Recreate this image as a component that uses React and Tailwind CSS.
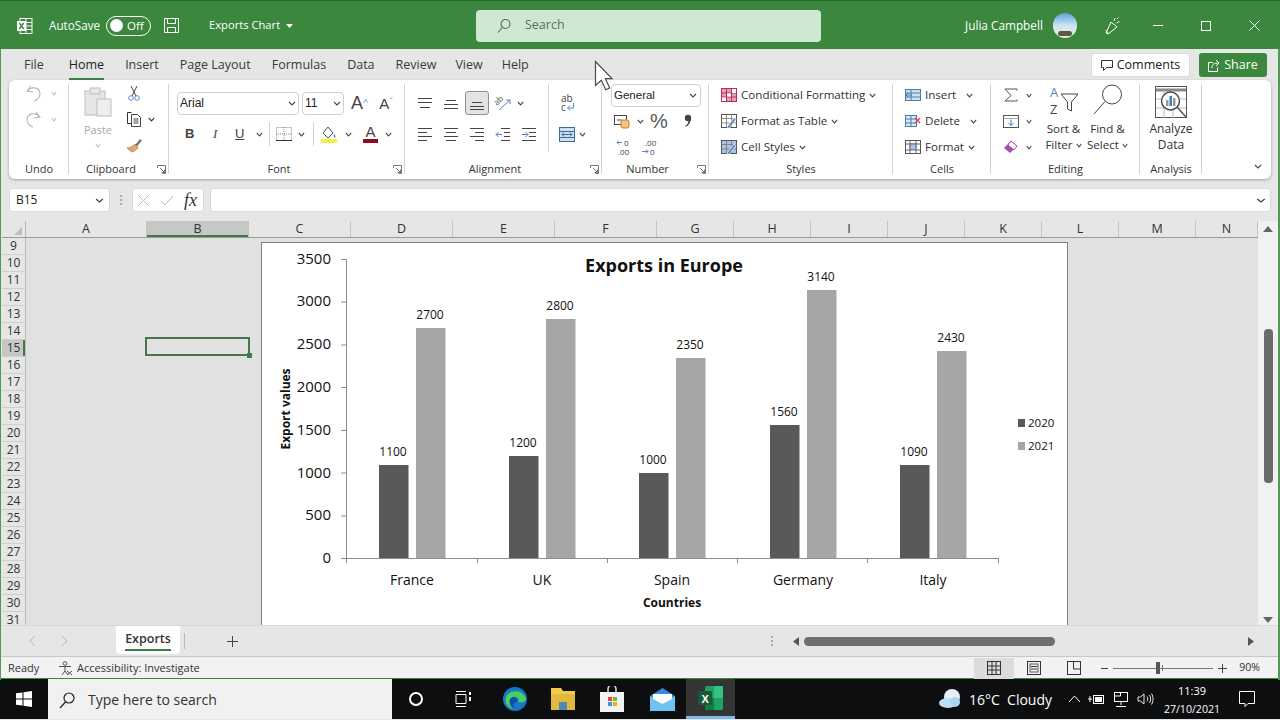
import React from "react";

const Chev = ({ c = "#444", w = 8 }) => (
  <svg width={w} height="5" viewBox="0 0 8 5" preserveAspectRatio="none" className="shrink-0"><path d="M1 1l3 3 3-3" fill="none" stroke={c} strokeWidth="1.1" /></svg>
);
const S = ({ w = 16, h = 16, children, className = "" }) => (
  <svg width={w} height={h} viewBox={`0 0 ${w} ${h}`} className={`shrink-0 overflow-visible ${className}`} fill="none">{children}</svg>
);
const Launcher = () => (
  <S w={9} h={9}><path d="M.5 3v-2.5h8v8h-3M3 3l4.5 4.5M7.5 4.5v3h-3" stroke="#666" strokeWidth=".9" /></S>
);
const Lines = ({ ys, spans, c = "#444" }) => (
  <S w={16} h={16}>{ys.map((y, i) => <path key={i} d={`M${spans[i][0]} ${y}.5H${spans[i][1]}`} stroke={c} />)}</S>
);
const Group = ({ w, label, launcher, sep = true, children, lx = "" }) => (
  <div className="flex flex-col shrink-0 h-full relative" style={{ width: w }}>
    <div className="h-[80px] flex">{children}</div>
    <div className={`h-[18px] flex items-center justify-center text-[11px] text-[#333] ${lx}`}>{label}</div>
    {launcher && <div className="absolute right-[3px] bottom-[5px] flex"><Launcher /></div>}
    {sep && <div className="absolute right-0 top-[4px] bottom-[5px] w-px bg-[#d4d4d4]" />}
  </div>
);
const Tab = ({ children, active }) => (
  <div className={`h-[31px] pt-[1px] flex items-center relative text-[12.5px] ${active ? "text-[#1e1e1e] font-medium" : "text-[#3a3a3a]"}`}>
    {children}
    {active && <div className="absolute left-0 right-0 bottom-0 h-[2px] bg-[#3b7d43]" />}
  </div>
);
const GridIcon = ({ a = "#b03060", fill = "#e8a0b0" }) => (
  <S w={16} h={16}><rect x=".5" y="1.5" width="15" height="13" fill={fill} stroke={a} /><path d="M.5 6h15M.5 10h15M5.5 1.5v13M10.5 1.5v13" stroke={a} /><rect x="6" y="6.5" width="4" height="3" fill="#fff" /><rect x="11" y="2" width="4" height="4" fill="#fff" /><rect x="1" y="10.5" width="4" height="3.5" fill="#fff" /></S>
);
const TableIcon = ({ cell }) => (
  <S w={16} h={16}><rect x=".5" y="1.5" width="15" height="13" fill={cell ? "#a9c4e6" : "#fff"} stroke="#555" /><path d="M.5 5.5h15M.5 10h15M5.5 1.5v13M10.5 1.5v13" stroke="#777" strokeWidth=".8" /><path d="M6 14l7-9 2 1.5-7 9z" fill="#5a86bf" stroke="#fff" strokeWidth=".7" /></S>
);

const cols = [["A", 121], ["B", 102], ["C", 102], ["D", 102], ["E", 102], ["F", 102], ["G", 77], ["H", 77], ["I", 77], ["J", 77], ["K", 77], ["L", 77], ["M", 77], ["N", 62]];
const rows = Array.from({ length: 23 }, (_, i) => i + 9);

const series = [
  ["France", 379, 465, 1100, 416, 328, 2700],
  ["UK", 509, 456, 1200, 546, 319, 2800],
  ["Spain", 639, 473, 1000, 676, 358, 2350],
  ["Germany", 770, 425, 1560, 807, 290, 3140],
  ["Italy", 900, 465, 1090, 937, 351, 2430],
];

const Chart = () => (
  <svg width="805" height="383" viewBox="262 243 805 383" className="block" fontFamily="'Open Sans',sans-serif">
    <path d="M346.5 259v299.5H998M341 259.5h5M341 302h5M341 345h5M341 387.5h5M341 430.5h5M341 473h5M341 516h5M341 558.5h5M477.5 558v5M607.5 558v5M737.5 558v5M867.5 558v5M998.5 558v5M346.5 558v5" stroke="#8c8c8c" fill="none" />
    {[3500, 3000, 2500, 2000, 1500, 1000, 500, 0].map((v, i) => (
      <text key={v} x="331" y={263.5 + i * 42.8} textAnchor="end" fontSize="15" fill="#111">{v}</text>
    ))}
    {series.map(([n, x1, t1, v1, x2, t2, v2]) => (
      <g key={n}>
        <rect x={x1} y={t1} width="29.5" height={558 - t1} fill="#595959" />
        <rect x={x2} y={t2} width="29.5" height={558 - t2} fill="#a6a6a6" />
        <text x={x1 + 14} y={t1 - 9} textAnchor="middle" fontSize="12" fill="#111">{v1}</text>
        <text x={x2 + 14} y={t2 - 9} textAnchor="middle" fontSize="12" fill="#111">{v2}</text>
        <text x={x1 + 33} y="584.5" textAnchor="middle" fontSize="14" fill="#111">{n}</text>
      </g>
    ))}
    <text x="664" y="271.5" textAnchor="middle" fontSize="18" fontWeight="700" fill="#111">Exports in Europe</text>
    <text x="672" y="607" textAnchor="middle" fontSize="12" fontWeight="700" fill="#111">Countries</text>
    <text transform="translate(290 409) rotate(-90)" textAnchor="middle" fontSize="12" fontWeight="700" fill="#111">Export values</text>
    <rect x="1018" y="419" width="7" height="8" fill="#595959" />
    <rect x="1018" y="442" width="7" height="8" fill="#a6a6a6" />
    <text x="1028" y="427" fontSize="11.5" fill="#111">2020</text>
    <text x="1028" y="450" fontSize="11.5" fill="#111">2021</text>
  </svg>
);

export default function App() {
  return (
    <div className="relative w-[1280px] h-[720px] overflow-hidden flex flex-col bg-[#e6e6e6] font-['Open_Sans',sans-serif] text-[#333]">
      {/* Title bar */}
      <div className="h-[49px] shrink-0 bg-[#3a873d] border-t border-[#1f6d2d] pt-[1px] flex items-center text-white text-[12px]">
        <div className="ml-[17px] w-[16px] flex">
          <S w={16} h={18}><rect x="3" y="1.5" width="12" height="15" stroke="#fff" /><path d="M3 5.5h12M3 9h12M3 12.5h12M9 1.5v15" stroke="#fff" /><rect x="0" y="4" width="9" height="10" fill="#fff" /><path d="M2.3 6l4.4 6M6.7 6l-4.4 6" stroke="#3a873d" strokeWidth="1.4" /></S>
        </div>
        <span className="ml-[16px] w-[57px] text-[11.7px]">AutoSave</span>
        <div className="w-[45px] h-[20px] rounded-full border border-white flex items-center pl-[3px] gap-[4px]">
          <div className="w-[13px] h-[13px] rounded-full bg-white" />
          <span className="text-[11.5px]">Off</span>
        </div>
        <div className="ml-[12px] flex">
          <S w={17} h={17}><path d="M1.5 1.5h14v14h-14zM4.5 1.5v5h8v-5M4.5 15.5v-5h8v5" stroke="#fff" strokeWidth="1" /></S>
        </div>
        <span className="ml-[29px] w-[77px] text-[11.2px] whitespace-nowrap">Exports Chart</span>
        <svg width="7" height="4" viewBox="0 0 7 4"><path d="M0 0h7L3.5 4z" fill="#fff" /></svg>
        <div className="ml-[183px] w-[345px] h-[32px] bg-[#cfe8d1] rounded-[4px] flex items-center text-[#55705a]">
          <div className="ml-[21px] flex">
            <S w={14} h={16}><circle cx="8.5" cy="6" r="4.5" stroke="#4d6b52" strokeWidth="1.1" /><path d="M5.2 9.5L1 14.5" stroke="#4d6b52" strokeWidth="1.1" /></S>
          </div>
          <span className="ml-[14px] text-[12.5px]">Search</span>
        </div>
        <span className="ml-[144px] w-[85px] text-[11.8px] whitespace-nowrap">Julia Campbell</span>
        <div className="ml-[3px] w-[24px] h-[25px] rounded-full bg-gradient-to-b from-[#5b9fdc] via-[#cfe4f2] to-[#e4eee0] relative overflow-hidden">
          <div className="absolute bottom-[2px] left-[5px] w-[14px] h-[5px] bg-[#5c5a40] rounded-sm" />
        </div>
        <div className="ml-[25px] flex">
          <S w={18} h={20}><path d="M9 6L4 17l2 1 9-7zM3.5 14l3 3.5" stroke="#fff" /><path d="M12 5l1-3M14.5 7l3-1.5M15 3l1.5-1.5" stroke="#fff" /></S>
        </div>
        <div className="ml-[33px] w-[10px] h-px bg-white" />
        <div className="ml-[38px] w-[10px] h-[10px] border border-white" />
        <div className="ml-[38px] flex">
          <S w={11} h={11}><path d="M.5.5l10 10M10.5.5l-10 10" stroke="#fff" /></S>
        </div>
      </div>

      {/* Tabs */}
      <div className="h-[31px] shrink-0 flex items-center pl-[24px] relative">
        <div className="flex gap-[21px] items-center"><Tab>File</Tab>
          <div className="ml-[4px]"><Tab active>Home</Tab></div>
          <Tab>Insert</Tab><Tab>Page Layout</Tab><Tab>Formulas</Tab><Tab>Data</Tab><Tab>Review</Tab>
          <div className="ml-[-2px]"><Tab>View</Tab></div>
          <div className="ml-[-2px]"><Tab>Help</Tab></div>
        </div>
        <div className="ml-auto mr-[13px] flex gap-[9px] items-center">
          <div className="w-[99px] h-[24px] pt-[1px] bg-white rounded-[3px] border border-[#dcdcdc] flex items-center justify-center gap-[4px] text-[12.5px] text-[#222]">
            <S w={12} h={12}><path d="M.5 1.5h11v7h-6l-3 3v-3h-2z" stroke="#333" /></S>Comments
          </div>
          <div className="w-[68px] h-[24px] pt-[1px] bg-[#3a873d] rounded-[3px] flex items-center justify-center gap-[4px] text-[12.5px] text-white">
            <S w={12} h={13}><path d="M5 3.5H.5v9h9v-4M4 9c0-4 2-5 7-5M8 1l3 3-3 3" stroke="#fff" /></S>Share
          </div>
        </div>
      </div>

      {/* Ribbon */}
      <div className="mx-[9px] h-[99px] shrink-0 bg-white rounded-[6px] shadow-[0_1px_3px_rgba(0,0,0,.3)] flex text-[#333]">
        <Group w={60} label="Undo">
          <div className="flex flex-col pl-[16px]">
            <div className="h-[26px] flex items-center gap-[9px]"><S w={17} h={17}><path d="M6 1L2 6l6 1M2.5 6C6 1 14 2 15 8c0 4-3 7-6 8" stroke="#b5b5b5" strokeWidth="1.1" /></S><Chev c="#bbb" w={6} /></div>
            <div className="h-[26px] flex items-center gap-[9px]"><S w={17} h={17}><path d="M11 1l4 5-6 1M14.5 6C11 1 3 2 2 8c0 4 3 7 6 8" stroke="#b5b5b5" strokeWidth="1.1" /></S><Chev c="#bbb" w={6} /></div>
          </div>
        </Group>
        <Group w={100} label="Clipboard" launcher lx="pr-[16px]">
          <div className="w-[50px] pl-[8px] pt-[7px] flex flex-col items-center">
            <S w={28} h={30}><rect x="1" y="4" width="20" height="24" fill="#e6e6e6" stroke="#bdbdbd" /><rect x="6" y="1" width="10" height="6" fill="#e6e6e6" stroke="#bdbdbd" /><rect x="13" y="12" width="14" height="17" fill="#eee" stroke="#bdbdbd" /></S>
            <span className="text-[11px] text-[#a8a8a8] mt-[5px] leading-[16px]">Paste</span>
            <div className="mt-[5px]"><Chev c="#bbb" w={6} /></div>
          </div>
          <div className="flex flex-col ml-[7px]">
            <div className="h-[26px] flex items-center pl-[1px]"><S w={14} h={17}><path d="M4 1l5 10M10 1L5 11" stroke="#444" /><circle cx="4" cy="13" r="2.3" stroke="#5a8cc0" /><circle cx="10" cy="13" r="2.3" stroke="#5a8cc0" /></S></div>
            <div className="h-[26px] flex items-center gap-[4px]"><S w={18} h={17}><path d="M5.5 12.5h-4v-11h4" stroke="#333" /><path d="M5.5 3.5h6l3 3v9h-9zM7.5 8h5M7.5 10h5M7.5 12h5" stroke="#333" strokeWidth=".9" /></S><Chev c="#333" w={7} /></div>
            <div className="h-[26px] flex items-center"><S w={17} h={16}><path d="M9 8l5-6 2 1.5-5 6z" fill="#777" /><path d="M9 7l3 4-5 4c-2 0-5-3-6-4 3 0 6-2 8-4z" fill="#e0a878" stroke="#b8763c" strokeWidth=".7" /></S></div>
          </div>
        </Group>
        <Group w={236} label="Font" launcher lx="pr-[16px]">
          <div className="pl-[8px] pt-[11px] flex flex-col gap-[7px]">
            <div className="flex items-center h-[24px]">
              <div className="w-[122px] h-[23px] rounded-[4px] border border-[#d0d0d0] flex items-center justify-between pl-[2px] pr-[2px] text-[12px] text-[#222] font-['Liberation_Sans',sans-serif]">Arial<Chev /></div>
              <div className="ml-[3px] w-[42px] h-[23px] rounded-[4px] border border-[#d0d0d0] flex items-center justify-between pl-[2px] pr-[2px] text-[12px] text-[#222] font-['Liberation_Sans',sans-serif]">11<Chev /></div>
              <span className="ml-[7px] text-[18px] leading-none font-['Liberation_Sans',sans-serif] text-[#444]">A</span><span className="text-[9px] text-[#5a86bf] self-start mt-[4px]">^</span>
              <span className="ml-[11px] text-[15px] leading-none font-['Liberation_Sans',sans-serif] text-[#444]">A</span><span className="text-[9px] text-[#5a86bf] self-start mt-[4px]">ˇ</span>
            </div>
            <div className="flex items-center h-[24px] pl-[8px]">
              <span className="w-[28px] text-[13px] font-bold text-[#444] font-['Liberation_Sans',sans-serif]">B</span>
              <span className="w-[22px] text-[13px] italic text-[#444] font-['Liberation_Serif',serif]">I</span>
              <span className="w-[15px] text-[13px] underline text-[#444] font-['Liberation_Sans',sans-serif]">U</span>
              <div className="ml-[6px] mr-[6px]"><Chev w={7} /></div>
              <div className="w-px h-[24px] bg-[#d4d4d4]" />
              <div className="ml-[6px]"><S><rect x=".5" y="1.5" width="15" height="13" stroke="#888" strokeDasharray="1 1" /><path d="M8 1v13M0 8h16" stroke="#888" strokeDasharray="1 1" /><path d="M0 14.5h16" stroke="#333" /></S></div>
              <div className="ml-[6px] mr-[8px]"><Chev w={7} /></div>
              <div className="w-px h-[24px] bg-[#d4d4d4]" />
              <div className="ml-[7px] flex flex-col items-center"><S w={16} h={13}><path d="M7 1L2 7l5 5 5-5z" stroke="#555" /><path d="M13 8c1 1 2 2 1 4-1 0-2-2-1-4z" fill="#5a86bf" /></S><div className="w-[16px] h-[4px] bg-[#f2f24a]" /></div>
              <div className="ml-[8px] mr-[11px]"><Chev w={7} /></div>
              <div className="flex flex-col items-center"><span className="text-[15px] leading-[14px] font-['Liberation_Sans',sans-serif] text-[#444]">A</span><div className="w-[15px] h-[4px] bg-[#8f0a20]" /></div>
              <div className="ml-[7px]"><Chev w={7} /></div>
            </div>
          </div>
        </Group>
        <Group w={197} label="Alignment" launcher lx="pr-[17px]">
          <div className="w-[143px] pl-[12px] pt-[11px] flex flex-col gap-[7px]">
            <div className="flex items-center h-[24px] gap-[10px]">
              <Lines ys={[3, 7, 12]} spans={[[1, 15], [1, 15], [3, 13]]} />
              <Lines ys={[5, 9, 13]} spans={[[3, 13], [1, 15], [1, 15]]} />
              <div className="w-[24px] h-[24px] mx-[-4px] rounded-[3px] border border-[#8f8f8f] bg-[#e3e3e3] flex items-center justify-center"><Lines ys={[7, 11, 14]} spans={[[3, 13], [1, 15], [1, 15]]} /></div>
              <S w={16} h={16}><text transform="translate(2 11) rotate(-45)" fontSize="8.5" fill="#555">ab</text><path d="M4 15L15 5M15 5h-4M15 5v4" stroke="#5a86bf" /></S>
              <div className="ml-[-4px]"><Chev w={7} /></div>
            </div>
            <div className="flex items-center h-[24px] gap-[10px]">
              <Lines ys={[2, 6, 10, 14]} spans={[[1, 15], [1, 10], [1, 15], [1, 10]]} />
              <Lines ys={[2, 6, 10, 14]} spans={[[1, 15], [3, 13], [1, 15], [3, 13]]} />
              <Lines ys={[2, 6, 10, 14]} spans={[[1, 15], [6, 15], [1, 15], [6, 15]]} />
              <S><path d="M6 2.5h9M9 6.5h6M9 10.5h6M6 14.5h9" stroke="#444" /><path d="M7 8.5H1M3.5 6L1 8.5 3.5 11" stroke="#5a86bf" /></S>
              <S><path d="M1 2.5h14M8 6.5h7M8 10.5h7M1 14.5h14" stroke="#444" /><path d="M1 8.5h6M4.5 6L7 8.5 4.5 11" stroke="#5a86bf" /></S>
            </div>
          </div>
          <div className="w-px h-[68px] mt-[4px] bg-[#d4d4d4]" />
          <div className="pl-[10px] pt-[11px] flex flex-col gap-[7px]">
            <div className="h-[24px] flex items-center">
              <S w={17} h={19}><text x="2" y="8" fontSize="10" fill="#444">ab</text><text x="2" y="17" fontSize="10" fill="#444">c</text><path d="M14.5 9v5h-6M11 11.5L8.5 14l2.5 2.5" stroke="#5a86bf" /></S>
            </div>
            <div className="h-[24px] flex items-center gap-[4px]">
              <S><rect x=".5" y="1.5" width="15" height="14" fill="#cfe0f2" stroke="#3d6f96" /><path d="M.5 5.5h15M.5 11.5h15" stroke="#3d6f96" /><path d="M3 8.5h10M3 8.5l2-2M3 8.5l2 2M13 8.5l-2-2M13 8.5l-2 2" stroke="#3d6f96" /></S>
              <Chev w={7} />
            </div>
          </div>
        </Group>
        <Group w={107} label="Number" launcher lx="pr-[16px]">
          <div className="pl-[9px] pt-[4px] flex flex-col">
            <div className="w-[90px] h-[23px] rounded-[4px] border border-[#d0d0d0] flex items-center justify-between pl-[2px] pr-[3px] text-[11.5px] text-[#222] font-['Liberation_Sans',sans-serif]">General<Chev /></div>
            <div className="flex items-center h-[26px] mt-[1px] pl-[3px]">
              <S w={16} h={16}><rect x=".5" y="2.5" width="12" height="9" stroke="#444" /><path d="M3 7h5" stroke="#444" /><rect x="7" y="7" width="8" height="8" rx="2" fill="#f2c48a" stroke="#d07a20" /></S>
              <div className="ml-[7px]"><Chev w={7} /></div>
              <span className="ml-[6px] w-[26px] text-[20px] leading-none text-[#555] font-['Liberation_Sans',sans-serif]">%</span>
              <div className="ml-[8px] flex"><S w={8} h={14}><circle cx="4" cy="4" r="3.2" fill="#444" /><path d="M7 4c0 4-2 7-5 9l-.5-1c2-1.5 3-3.5 3-6z" fill="#444" /></S></div>
            </div>
            <div className="flex items-center h-[26px] pl-[5px] gap-[10px]">
              <S w={16} h={17}><path d="M6 3.5H1M3 1.5l-2 2 2 2" stroke="#5a86bf" /><text x="8" y="7" fontSize="8" fill="#444">0</text><text x="2" y="16" fontSize="8" fill="#444">.00</text></S>
              <S w={16} h={17}><text x="3" y="7" fontSize="8" fill="#444">.00</text><path d="M0 12.5h6M4 10.5l2 2-2 2" stroke="#5a86bf" /><text x="8" y="16" fontSize="8" fill="#444">0</text></S>
            </div>
          </div>
        </Group>
        <Group w={184} label="Styles">
          <div className="pl-[12px] pt-[2px] flex flex-col text-[11.6px] text-[#333]">
            <div className="h-[26px] flex items-center gap-[4px]"><GridIcon /><span className="whitespace-nowrap">Conditional Formatting</span><Chev w={7} /></div>
            <div className="h-[26px] flex items-center gap-[4px]"><TableIcon /><span className="whitespace-nowrap">Format as Table</span><Chev w={7} /></div>
            <div className="h-[26px] flex items-center gap-[4px]"><TableIcon cell /><span className="whitespace-nowrap">Cell Styles</span><Chev w={7} /></div>
          </div>
        </Group>
        <Group w={98} label="Cells">
          <div className="pl-[12px] pt-[2px] flex flex-col text-[11.6px] text-[#333]">
            <div className="h-[26px] flex items-center gap-[4px] w-[68px]"><S><rect x=".5" y="2.5" width="15" height="11" fill="#cfe0f2" stroke="#4b7ea8" /><path d="M.5 6h15M.5 10h15M6 2.5v11" stroke="#4b7ea8" /><path d="M7 8H1M3 6L1 8l2 2" stroke="#4b7ea8" /></S><span className="flex-1">Insert</span><Chev w={7} /></div>
            <div className="h-[26px] flex items-center gap-[4px] w-[72px]"><S><rect x=".5" y="2.5" width="11" height="11" fill="#dbe7f4" stroke="#4b7ea8" /><path d="M.5 6h11M.5 10h11M6 2.5v11" stroke="#4b7ea8" /><path d="M10 5l5 5M15 5l-5 5" stroke="#d0455a" strokeWidth="1.4" /></S><span className="flex-1">Delete</span><Chev w={7} /></div>
            <div className="h-[26px] flex items-center gap-[4px] w-[70px]"><S><rect x=".5" y="1.5" width="15" height="13" stroke="#555" /><rect x="4" y="4" width="8" height="7" fill="#a9c4e6" /><path d="M.5 5h15M.5 11h15M5 1.5v13M11 1.5v13" stroke="#666" /></S><span className="flex-1">Format</span><Chev w={7} /></div>
          </div>
        </Group>
        <Group w={149} label="Editing">
          <div className="pl-[12px] pt-[2px] flex flex-col w-[52px]">
            <div className="h-[26px] flex items-center gap-[7px]"><S><path d="M14 3.5V2H2l6 6.5L2 14h12v-1.5" stroke="#555" /></S><Chev w={6} /></div>
            <div className="h-[26px] flex items-center gap-[7px]"><S><rect x=".5" y="2.5" width="15" height="12" stroke="#555" /><path d="M.5 5.5h15" stroke="#aaa" /><path d="M8 6.5v6M5.5 10L8 12.5 10.5 10" stroke="#3f7fb8" /></S><Chev w={6} /></div>
            <div className="h-[26px] flex items-center gap-[7px]"><S><path d="M1 9l7-7 6 5-7 7z" fill="#a84cb0" /><path d="M8 2l6 5-3 4-6-5z" fill="#fff" stroke="#a84cb0" /></S><Chev w={6} /></div>
          </div>
          <div className="w-[47px] flex flex-col items-center pt-[5px] text-[11.6px] leading-[16px] ml-[-3px]">
            <S w={30} h={30}><text x="1" y="12" fontSize="13" fill="#5a86bf" fontFamily="'Open Sans',sans-serif">A</text><text x="1" y="29" fontSize="13" fill="#444" fontFamily="'Open Sans',sans-serif">Z</text><path d="M12 9h17l-6.5 8v9l-4-2v-7z" stroke="#444" /></S>
            <span className="mt-[6px] whitespace-nowrap">Sort &amp;</span>
            <span className="flex items-center gap-[3px] whitespace-nowrap">Filter<Chev w={6} /></span>
          </div>
          <div className="w-[47px] ml-[-3px] flex flex-col items-center pt-[4px] text-[11.6px] leading-[16px]">
            <S w={30} h={31}><circle cx="19" cy="10.5" r="9.5" stroke="#444" /><path d="M12 17.5L1 30" stroke="#444" /></S>
            <span className="mt-[6px] whitespace-nowrap">Find &amp;</span>
            <span className="flex items-center gap-[3px] whitespace-nowrap">Select<Chev w={6} /></span>
          </div>
        </Group>
        <Group w={62} label="Analysis">
          <div className="w-full flex flex-col items-center pt-[6px] text-[12px] leading-[16px]">
            <S w={33} h={32}><rect x=".5" y=".5" width="31" height="31" stroke="#555" /><path d="M1 4h30" stroke="#888" strokeWidth="3" /><path d="M1 13h30M1 22h30M9 4v28M18 4v28" stroke="#bbb" /><circle cx="15.5" cy="15" r="9" fill="#fff" stroke="#444" strokeWidth="1.4" /><path d="M22 21l9 10" stroke="#555" strokeWidth="1.5" /><rect x="11" y="14" width="2.5" height="6" fill="#999" /><rect x="14.5" y="10" width="2.5" height="10" fill="#3f7fb8" /><rect x="18" y="12" width="2.5" height="8" fill="#999" /></S>
            <span className="mt-[3px]">Analyze</span><span>Data</span>
          </div>
        </Group>
        <div className="flex-1 flex items-end justify-end pr-[9px] pb-[10px]"><Chev c="#444" w={8} /></div>
      </div>

      {/* Formula bar */}
      <div className="h-[24px] mt-[9px] shrink-0 mx-[9px] flex items-center">
        <div className="w-[101px] h-[24px] bg-white rounded-[3px] border border-[#dadada] flex items-center justify-between pl-[6px] pr-[5px] text-[12px] text-[#222]">B15<Chev w={9} /></div>
        <div className="w-[22px] flex flex-col items-center gap-[2px]">
          <div className="w-[2px] h-[2px] bg-[#aaa]" /><div className="w-[2px] h-[2px] bg-[#aaa]" /><div className="w-[2px] h-[2px] bg-[#aaa]" />
        </div>
        <div className="w-[72px] h-[24px] bg-white rounded-[3px] border border-[#dadada] flex items-center pl-[4px] gap-[10px]">
          <S w={13} h={13}><path d="M1 1l11 11M12 1L1 12" stroke="#bcbcbc" /></S>
          <S w={14} h={13}><path d="M1 7l4 4 8-9" stroke="#bcbcbc" /></S>
          <span className="text-[18px] leading-none italic font-['Liberation_Serif',serif] text-[#333]">fx</span>
        </div>
        <div className="ml-[6px] flex-1 h-[24px] bg-white rounded-[3px] border border-[#dadada] flex items-center justify-end pr-[4px]"><Chev w={10} /></div>
      </div>

      {/* Sheet */}
      <div className="mt-[9px] h-[404px] shrink-0 flex relative">
        <div className="w-[1258px] flex flex-col shrink-0 pl-[2px]">
          <div className="h-[16px] flex border-b border-[#9a9a9a] text-[12.5px] text-[#333] shrink-0 box-content">
            <div className="w-[24px] flex items-end justify-end pr-[3px] pb-[2px] border-r border-[#bbb]"><svg width="8" height="8" viewBox="0 0 8 8"><path d="M8 0v8H0z" fill="#bdbdbd" /></svg></div>
            {cols.map(([c, w]) => (
              <div key={c} className={`shrink-0 flex items-center justify-center border-r border-[#c4c4c4] leading-none ${c === "B" ? "bg-[#c6c8c6] shadow-[inset_0_-2px_0_#3f7a4a]" : ""}`} style={{ width: w }}>{c}</div>
            ))}
          </div>
          <div className="flex-1 flex overflow-hidden">
            <div className="w-[24px] shrink-0 flex flex-col border-r border-[#bbb] h-[387px] overflow-hidden">
              {rows.map((r) => (
                <div key={r} className={`h-[17px] shrink-0 text-[12px] leading-none flex items-center justify-center border-b border-[#cfcfcf] ${r === 15 ? "bg-[#c6c8c6] shadow-[inset_-2px_0_0_#3f7a4a]" : ""}`}>{r}</div>
              ))}
            </div>
            <div className="flex-1 bg-[#e1e1e1] pl-[235px] pt-[4px] relative">
              <div className="w-[807px] bg-white border-x border-t border-[#7f7f7f] box-border h-[384px] overflow-hidden"><Chart /></div>
              <div className="absolute left-[119px] top-[99px] w-[105px] h-[19px] border-2 border-[#47754f]" />
              <div className="absolute left-[221px] top-[115px] w-[5px] h-[5px] bg-[#47754f]" />
            </div>
          </div>
        </div>
        <div className="flex-1 flex flex-col items-center pl-[2px] pr-[4px] bg-[#f1f1f1] pt-[5px]">
          <svg width="10" height="6" viewBox="0 0 10 6"><path d="M5 0l5 6H0z" fill="#666" /></svg>
          <div className="mt-[97px] w-[9px] h-[154px] bg-[#6a6a6a] rounded-[4px]" />
          <div className="mt-[134px]"><svg width="10" height="6" viewBox="0 0 10 6"><path d="M5 6l5-6H0z" fill="#666" /></svg></div>
        </div>
      </div>

      {/* Sheet tabs */}
      <div className="h-[31px] shrink-0 flex items-center text-[#333] relative border-t border-[#d8d8d8]">
        <div className="ml-[28px] flex"><S w={8} h={12}><path d="M7 1L2 6l5 5" stroke="#b5b5b5" /></S></div>
        <div className="ml-[25px] flex"><S w={8} h={12}><path d="M1 1l5 5-5 5" stroke="#b5b5b5" /></S></div>
        <div className="ml-[47px] w-[64px] h-[28px] self-start bg-white rounded-b-[4px] flex flex-col items-center justify-center">
          <span className="text-[12.5px] font-semibold leading-[20px] text-[#333] border-b-2 border-[#3f7a4a]">Exports</span>
        </div>
        <div className="ml-[4px] w-px h-[16px] bg-[#bbb]" />
        <div className="ml-[42px] flex"><S w={11} h={11}><path d="M5.5 0v11M0 5.5h11" stroke="#444" /></S></div>
        <div className="ml-[533px] flex flex-col gap-[2px]">
          <div className="w-[2px] h-[2px] bg-[#aaa]" /><div className="w-[2px] h-[2px] bg-[#aaa]" /><div className="w-[2px] h-[2px] bg-[#aaa]" />
        </div>
        <div className="ml-[20px] flex"><svg width="6" height="9" viewBox="0 0 6 9"><path d="M6 0v9L0 4.5z" fill="#555" /></svg></div>
        <div className="ml-[5px] w-[251px] h-[9px] rounded-full bg-[#6e6e6e]" />
        <div className="ml-[193px] flex"><svg width="6" height="9" viewBox="0 0 6 9"><path d="M0 0v9l6-4.5z" fill="#555" /></svg></div>
      </div>

      {/* Status */}
      <div className="h-[23px] shrink-0 bg-[#f2f2f2] border-t border-[#c8c8c8] border-b border-b-[#3a873d] pt-[1px] flex items-center text-[11px] text-[#333]">
        <span className="ml-[8px] w-[50px]">Ready</span>
        <S w={15} h={15}><circle cx="7" cy="2.5" r="1.8" stroke="#555" /><path d="M1 5.5h12M7 6v4M7 10l-3 4M7 10l3 4" stroke="#555" /><path d="M9 10l5 4M14 10l-5 4" stroke="#555" /></S>
        <span className="ml-[4px]">Accessibility: Investigate</span>
        <div className="ml-auto w-[40px] h-[21px] bg-[#dcdcdc] flex items-center justify-center">
          <S w={14} h={14}><rect x=".5" y=".5" width="13" height="13" stroke="#333" /><path d="M5 1v12M9 1v12M1 5h12M1 9h12" stroke="#333" /></S>
        </div>
        <div className="w-[40px] flex justify-center"><S w={14} h={14}><rect x=".5" y=".5" width="13" height="13" stroke="#333" /><rect x="3" y="3" width="8" height="8" stroke="#333" strokeWidth=".8" /><path d="M4 5.5h6M4 8h6" stroke="#333" /></S></div>
        <div className="w-[40px] flex justify-center"><S w={14} h={14}><rect x=".5" y=".5" width="13" height="13" stroke="#333" /><path d="M6.5 0v8h7" stroke="#333" /></S></div>
        <div className="ml-[7px] w-[7px] h-px bg-[#444]" />
        <div className="ml-[5px] w-[100px] h-px bg-[#777] flex items-center">
          <div className="ml-[43px] w-[4px] h-[12px] bg-[#555]" />
          <div className="ml-[2px] w-px h-[6px] bg-[#777]" />
        </div>
        <div className="ml-[5px] flex"><S w={9} h={9}><path d="M4.5 0v9M0 4.5h9" stroke="#444" /></S></div>
        <span className="ml-[11px] mr-[20px] w-[22px] text-[10.5px] text-right whitespace-nowrap">90%</span>
      </div>

      {/* Taskbar */}
      <div className="h-[40px] shrink-0 bg-[#0d0e0f] flex items-center text-white relative">
        <div className="ml-[16px] flex"><S w={16} h={16}><path d="M0 2.3l6.5-.9v6.1H0zM7.5 1.3L16 0v7.5H7.5zM0 8.5h6.5v6.1L0 13.7zM7.5 8.5H16V16l-8.5-1.3z" fill="#fff" /></S></div>
        <div className="ml-[16px] w-[344px] h-[40px] pt-[1px] bg-[#f1f1f1] flex items-center text-[#333] text-[14px]">
          <div className="ml-[11px] flex"><S w={16} h={18}><circle cx="10" cy="7" r="5" stroke="#222" strokeWidth="1.2" /><path d="M6.5 11L1 17" stroke="#222" strokeWidth="1.2" /></S></div>
          <span className="ml-[13px] whitespace-nowrap">Type here to search</span>
        </div>
        <div className="ml-[17px] w-[14px] h-[14px] rounded-full border-2 border-white" />
        <div className="ml-[32px] flex"><S w={17} h={16}><path d="M1 .5h10M1 15.5h10M1 3.5h10v9H1z" stroke="#fff" /><path d="M14 1h2v3h-2zM14 6h2v4h-2z" fill="#fff" /></S></div>
        <div className="ml-[31px] flex"><svg width="24" height="24" viewBox="0 0 24 24"><circle cx="12" cy="12" r="12" fill="#1777c9" /><path d="M3 10c2-7 17-9 20 2 0 3-4 4-8 3 2-3-1-6-5-5-4 1-5 8 0 12C5 21 1 16 3 10z" fill="#49d05f" /><path d="M7 12c3-3 8-2 7 3-3 0-5 3-2 6-3 0-6-4-5-9z" fill="#0f4fa3" /></svg></div>
        <div className="ml-[24px] flex"><svg width="24" height="22" viewBox="0 0 24 22"><path d="M0 0h10l2 3h12v19H0z" fill="#f2c94c" /><rect x="0" y="6" width="24" height="16" fill="#e2b93f" /><rect x="8" y="14" width="8" height="8" fill="#4b89b5" /></svg></div>
        <div className="ml-[25px] flex"><svg width="24" height="26" viewBox="0 0 24 26"><path d="M8 5V2a4 4 0 018 0v3" transform="translate(0 1)" stroke="#ddd" fill="none" strokeWidth="1.5" /><rect x="0" y="6" width="24" height="20" fill="#f3f3f3" /><rect x="8" y="11" width="4" height="4" fill="#e0492f" /><rect x="13" y="11" width="4" height="4" fill="#7cb82f" /><rect x="8" y="16" width="4" height="4" fill="#2f9be0" /><rect x="13" y="16" width="4" height="4" fill="#f2b300" /></svg></div>
        <div className="ml-[26px] flex"><svg width="25" height="23" viewBox="0 0 25 23"><path d="M12.5 0L25 8v15H0V8z" fill="#3a8ad8" /><path d="M0 8l12.5 8L25 8v15H0z" fill="#6fc3f2" /><path d="M3 6h19v5l-9.5 5L3 11z" fill="#fff" /></svg></div>
        <div className="ml-[11px] w-[49px] h-[40px] bg-[#343434] border-b-[3px] border-[#7cb9ea] flex items-center justify-center">
          <svg width="25" height="24" viewBox="0 0 25 24"><rect x="7" y="0" width="18" height="24" rx="2" fill="#21a366" /><rect x="16" y="0" width="9" height="12" fill="#33c481" /><rect x="7" y="12" width="9" height="12" fill="#107c41" /><rect x="0" y="5" width="14" height="14" rx="1" fill="#185c37" /><text x="3.5" y="16.5" fontSize="11" fontWeight="700" fill="#fff" fontFamily="'Liberation Sans',sans-serif">X</text></svg>
        </div>
        <div className="ml-[204px] flex"><svg width="22" height="20" viewBox="0 0 22 20"><circle cx="13" cy="8" r="8" fill="#e8eef5" /><ellipse cx="9" cy="14" rx="9" ry="5" fill="#bfe0f7" /><circle cx="16" cy="13" r="5" fill="#a9d6f5" /></svg></div>
        <span className="ml-[8px] w-[83px] text-[14px] whitespace-nowrap">16°C&nbsp; Cloudy</span>
        <div className="ml-[16px] flex"><S w={13} h={8}><path d="M1 7l5.5-6L12 7" stroke="#fff" /></S></div>
        <div className="ml-[7px] flex"><S w={16} h={12}><rect x="5.5" y="2.5" width="10" height="8" stroke="#fff" /><rect x="7" y="4" width="7" height="5" fill="#fff" /><path d="M0 6h4M2 3v6" stroke="#fff" /></S></div>
        <div className="ml-[9px] flex"><S w={16} h={15}><rect x="1.5" y=".5" width="13" height="9" stroke="#fff" /><path d="M8 10v3M3 14.5h10M1.5 4h6V.5" stroke="#fff" /></S></div>
        <div className="ml-[8px] flex"><S w={16} h={14}><path d="M1 5h2.5L7 2v10L3.5 9H1zM10 4.5c1 1.5 1 3.5 0 5M12.5 3c1.5 2.5 1.5 5.5 0 8M14.5 1.5c2 3.5 2 7.5 0 11" stroke="#fff" strokeWidth=".9" /></S></div>
        <div className="ml-[6px] w-[66px] flex flex-col items-center text-[11px] leading-[19px] mt-[2px]"><span>11:39</span><span className="text-[10.6px]">27/10/2021</span></div>
        <div className="ml-[14px] flex"><S w={17} h={17}><path d="M.5.5h15v12H9l-3 3v-3H.5z" stroke="#fff" /></S></div>
      </div>

      {/* Window edge lines */}
      <div className="absolute left-0 top-[49px] w-px h-[631px] bg-[#4f9a56]" />
      <div className="absolute right-0 top-[49px] w-[2px] h-[631px] bg-[#4f9a56]" />

      {/* Mouse pointer */}
      <svg width="20" height="32" viewBox="0 0 20 32" className="absolute left-[594px] top-[60px]">
        <path d="M1.5 1.5v24l5.8-5.3 4.4 9.6 4-1.8-4.3-9.3H18z" fill="#fff" stroke="#4a4a4a" strokeWidth="1.2" />
      </svg>
    </div>
  );
}
